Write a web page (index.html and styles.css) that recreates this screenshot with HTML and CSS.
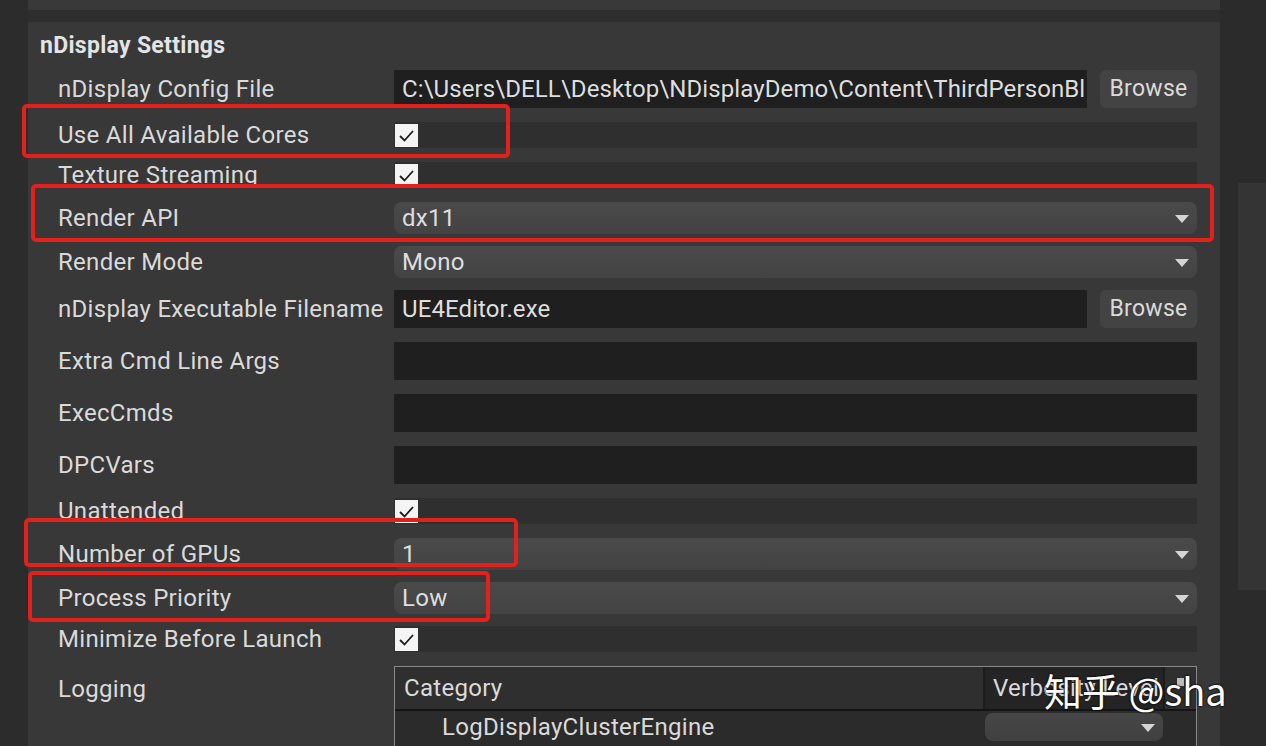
FILE: index.html
```html
<!DOCTYPE html>
<html>
<head>
<meta charset="utf-8">
<link rel="stylesheet" href="styles.css">
</head>
<body>
<div class="app">
  <div class="leftstrip"></div>
  <div class="main">
    <div class="topband"></div>
    <div class="gapband"></div>
    <div class="panel">
      <div class="header">nDisplay Settings</div>

      <div class="row r-input">
        <div class="label">nDisplay Config File</div>
        <div class="value split">
          <div class="textbox">C:\Users\DELL\Desktop\NDisplayDemo\Content\ThirdPersonBl</div>
          <div class="button">Browse</div>
        </div>
      </div>

      <div class="row r-check">
        <div class="label">Use All Available Cores</div>
        <div class="value band"><span class="checkbox"><svg viewBox="0 0 23 23"><path d="M5 12 L9.5 16.5 L18 7" /></svg></span></div>
      </div>

      <div class="row r-check">
        <div class="label">Texture Streaming</div>
        <div class="value band"><span class="checkbox"><svg viewBox="0 0 23 23"><path d="M5 12 L9.5 16.5 L18 7" /></svg></span></div>
      </div>

      <div class="row r-combo">
        <div class="label">Render API</div>
        <div class="value combo"><span>dx11</span><span class="arrow"></span></div>
      </div>

      <div class="row r-combo">
        <div class="label">Render Mode</div>
        <div class="value combo"><span>Mono</span><span class="arrow"></span></div>
      </div>

      <div class="row r-input">
        <div class="label">nDisplay Executable Filename</div>
        <div class="value split">
          <div class="textbox">UE4Editor.exe</div>
          <div class="button">Browse</div>
        </div>
      </div>

      <div class="row r-input">
        <div class="label">Extra Cmd Line Args</div>
        <div class="value textbox"></div>
      </div>

      <div class="row r-input">
        <div class="label">ExecCmds</div>
        <div class="value textbox"></div>
      </div>

      <div class="row r-input">
        <div class="label">DPCVars</div>
        <div class="value textbox"></div>
      </div>

      <div class="row r-check">
        <div class="label">Unattended</div>
        <div class="value band"><span class="checkbox"><svg viewBox="0 0 23 23"><path d="M5 12 L9.5 16.5 L18 7" /></svg></span></div>
      </div>

      <div class="row r-combo">
        <div class="label">Number of GPUs</div>
        <div class="value combo"><span>1</span><span class="arrow"></span></div>
      </div>

      <div class="row r-combo">
        <div class="label">Process Priority</div>
        <div class="value combo"><span>Low</span><span class="arrow"></span></div>
      </div>

      <div class="row r-check">
        <div class="label">Minimize Before Launch</div>
        <div class="value band"><span class="checkbox"><svg viewBox="0 0 23 23"><path d="M5 12 L9.5 16.5 L18 7" /></svg></span></div>
      </div>

      <div class="row r-table">
        <div class="label label-top">Logging</div>
        <div class="value table">
          <div class="thead">
            <div class="th c1">Category</div>
            <div class="th c2">Verbosity Level</div>
            <div class="th c3"><span class="sq"></span></div>
          </div>
          <div class="trow">
            <div class="td c1 indent">LogDisplayClusterEngine</div>
            <div class="td c2"><div class="minicombo"><span class="arrow"></span></div></div>
            <div class="td c3"></div>
          </div>
        </div>
      </div>
    </div>
  </div>
  <div class="rightside">
    <div class="track"></div>
  </div>

  <div class="mark m1"></div>
  <div class="mark m2"></div>
  <div class="mark m3"></div>
  <div class="mark m4"></div>

  <div class="watermark">知乎 @sha</div>
</div>
</body>
</html>
```

FILE: styles.css
```css
* { box-sizing: border-box; }
html, body {
  margin: 0;
  padding: 0;
  width: 1266px;
  height: 746px;
  overflow: hidden;
  background: #2b2b2b;
  font-family: Roboto, "Liberation Sans", sans-serif;
}
.app {
  position: relative;
  display: flex;
  width: 1266px;
  height: 746px;
  overflow: hidden;
}
.leftstrip {
  width: 28px;
  flex: none;
  background: #2c2c2c;
}
.main {
  width: 1192px;
  flex: none;
  display: flex;
  flex-direction: column;
}
.topband {
  height: 10px;
  background: #393939;
  flex: none;
}
.gapband {
  height: 12px;
  background: #2e2e2e;
  flex: none;
}
.panel {
  flex: 1;
  background: #383838;
  padding: 10px 23px 0 30px;
}
.header {
  height: 28px;
  line-height: 28px;
  margin: 0 0 10px -18px;
  font-size: 23px;
  letter-spacing: 0.3px;
  font-weight: 700;
  color: #e4e4e4;
}
.row {
  display: grid;
  grid-template-columns: 336px 803px;
  align-items: center;
}
.r-input { height: 38px; margin-bottom: 14px; }
.r-check { height: 25px; margin-bottom: 15px; }
.r-combo { height: 32px; margin-bottom: 12px; }
.r-table { align-items: start; }
.label {
  font-size: 24px;
  letter-spacing: 0.3px;
  color: #dadada;
  white-space: nowrap;
  line-height: 26px;
}
.label-top { padding-top: 10px; }
.value { height: 100%; }
.split {
  display: flex;
  gap: 13px;
}
.textbox {
  flex: 1;
  height: 100%;
  background: #1f1f1f;
  color: #dedede;
  font-size: 24px;
  letter-spacing: 0.1px;
  line-height: 38px;
  padding-left: 8px;
  white-space: nowrap;
  overflow: hidden;
}
.button {
  width: 97px;
  flex: none;
  background: #434343;
  border-radius: 6px;
  color: #dadada;
  font-size: 23px;
  letter-spacing: 0.3px;
  line-height: 38px;
  text-align: center;
}
.band {
  background: #2f2f2f;
  display: flex;
  align-items: center;
  padding-left: 1px;
}
.checkbox {
  width: 23px;
  height: 23px;
  background: #f4f4f4;
  display: block;
}
.checkbox svg {
  width: 23px;
  height: 23px;
  display: block;
}
.checkbox path {
  fill: none;
  stroke: #1c1c1c;
  stroke-width: 1.8;
}
.combo {
  background: linear-gradient(#4a4a4a, #434343);
  border-radius: 8px;
  display: flex;
  align-items: center;
  justify-content: space-between;
  padding: 0 8px 0 8px;
  color: #dedede;
  font-size: 24px;
  letter-spacing: 0.3px;
}
.arrow {
  width: 0;
  height: 0;
  border-left: 7px solid transparent;
  border-right: 7px solid transparent;
  border-top: 8px solid #d4d4d4;
  margin-top: 2px;
}
.table {
  height: 90px;
  border: 1px solid #8a8a8a;
  border-bottom: none;
  background: #2b2b2b;
}
.thead {
  display: flex;
  height: 44px;
  border-bottom: 2px solid #141414;
  background: #2f2f2f;
}
.th, .td {
  font-size: 24px;
  letter-spacing: 0.3px;
  color: #dadada;
  white-space: nowrap;
  overflow: hidden;
}
.th { line-height: 42px; }
.c1 { width: 590px; padding-left: 9px; border-right: 2px solid #1c1c1c; }
.c2 { width: 180px; padding-left: 8px; }
.th.c2 { background: #242424; border-right: 2px solid #1c1c1c; }
.c3 { flex: 1; position: relative; }
.sq {
  position: absolute;
  left: 12px;
  top: 11px;
  width: 7px;
  height: 8px;
  background: #bdbdbd;
}
.trow {
  display: flex;
  height: 44px;
}
.td { line-height: 32px; }
.td.c1 { border-right: none; }
.indent { padding-left: 47px; }
.td.c2 { padding: 2px 0 0 0; }
.minicombo {
  height: 28px;
  width: 178px;
  background: linear-gradient(#474747, #404040);
  border-radius: 8px;
  display: flex;
  justify-content: flex-end;
  align-items: center;
  padding-right: 8px;
}
.rightside {
  width: 46px;
  flex: none;
  background: #2b2b2b;
  padding: 183px 0 0 18px;
}
.track {
  height: 407px;
  background: #343434;
}
.mark {
  position: absolute;
  border: 4px solid #e4201a;
  border-radius: 5px;
}
.m1 { left: 22px; top: 104px; width: 488px; height: 54px; }
.m2 { left: 31px; top: 184px; width: 1183px; height: 58px; }
.m3 { left: 24px; top: 518px; width: 494px; height: 49px; }
.m4 { left: 28px; top: 571px; width: 462px; height: 51px; }
.watermark {
  position: absolute;
  left: 1044px;
  top: 664px;
  font-family: "Noto Sans CJK SC", "Noto Sans", sans-serif;
  font-size: 38px;
  line-height: 52px;
  color: #ffffff;
  text-shadow: 0 0 2px #000, 0 0 2px #000;
  white-space: nowrap;
}
```
